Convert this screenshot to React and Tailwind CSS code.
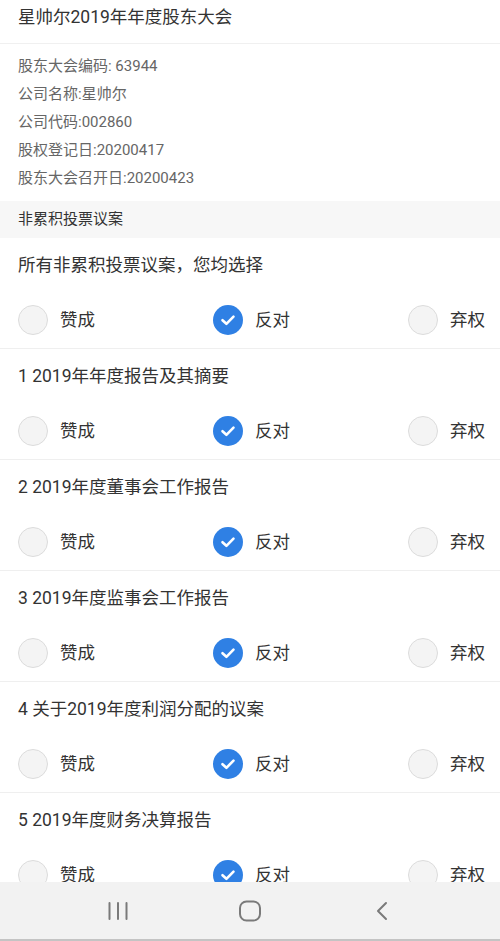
const info = [
  '股东大会编码: 63944',
  '公司名称:星帅尔',
  '公司代码:002860',
  '股权登记日:20200417',
  '股东大会召开日:20200423',
];

const questions = [
  '所有非累积投票议案，您均选择',
  '1 2019年年度报告及其摘要',
  '2 2019年度董事会工作报告',
  '3 2019年度监事会工作报告',
  '4 关于2019年度利润分配的议案',
  '5 2019年度财务决算报告',
];

function Radio({ checked, label }) {
  return (
    <div className="flex items-center gap-[12px]">
      {checked ? (
        <div className="w-[30px] h-[30px] rounded-full bg-[#2f80e4] flex items-center justify-center">
          <svg width="18" height="18" viewBox="0 0 18 18" fill="none">
            <path d="M3.5 9.2 L7.4 12.8 L14.5 5.6" stroke="white" strokeWidth="2.6" strokeLinecap="round" strokeLinejoin="round" />
          </svg>
        </div>
      ) : (
        <div className="w-[30px] h-[30px] rounded-full bg-[#f4f4f4] border border-[#dcdcdc]" />
      )}
      <span className="text-[17.5px] leading-[24px] text-[#333]">{label}</span>
    </div>
  );
}

function Question({ title }) {
  return (
    <div className="border-b border-[#efefef] pt-[15px] pb-[13px]">
      <div className="px-[18px] text-[17.5px] leading-[24px] text-[#333]">{title}</div>
      <div className="mt-[28px] pl-[18px] pr-[15px] flex justify-between items-center">
        <Radio label="赞成" />
        <Radio checked label="反对" />
        <Radio label="弃权" />
      </div>
    </div>
  );
}

export default function App() {
  return (
    <div
      className="w-[500px] h-[941px] overflow-hidden bg-white relative"
      style={{ fontFamily: "Roboto, 'Noto Sans CJK SC', sans-serif" }}
    >
      {/* header */}
      <div className="h-[44px] border-b border-[#f0f0f0] px-[18px] flex items-center">
        <div className="text-[17.5px] text-[#333] -mt-[8px]">星帅尔2019年年度股东大会</div>
      </div>

      {/* meeting info */}
      <div className="px-[18px] pt-[8px] pb-[9px]">
        {info.map((t) => (
          <div key={t} className="text-[15px] leading-[28px] text-[#666]">{t}</div>
        ))}
      </div>

      {/* section */}
      <div className="h-[37px] bg-[#f7f7f7] px-[18px] flex items-center">
        <span className="text-[15px] text-[#333]">非累积投票议案</span>
      </div>

      {questions.map((q) => (
        <Question key={q} title={q} />
      ))}

      {/* android nav bar */}
      <div className="absolute left-0 right-0 bottom-0 h-[59px] bg-[#f2f2f2] border-b-2 border-[#c4c4c4] flex items-center justify-center">
        <div className="w-[132px] flex justify-center">
          <svg width="24" height="22" viewBox="0 0 24 22" fill="none">
            <path d="M3.5 3 V19 M12 3 V19 M20.5 3 V19" stroke="#7a7a7a" strokeWidth="2" strokeLinecap="round" />
          </svg>
        </div>
        <div className="w-[132px] flex justify-center">
          <svg width="24" height="24" viewBox="0 0 24 24" fill="none">
            <rect x="2" y="2.5" width="20" height="19" rx="6.5" stroke="#7a7a7a" strokeWidth="2" />
          </svg>
        </div>
        <div className="w-[132px] flex justify-center">
          <svg width="16" height="22" viewBox="0 0 16 22" fill="none">
            <path d="M12 3 L4 11 L12 19" stroke="#7a7a7a" strokeWidth="2" strokeLinecap="round" strokeLinejoin="round" />
          </svg>
        </div>
      </div>
    </div>
  );
}
